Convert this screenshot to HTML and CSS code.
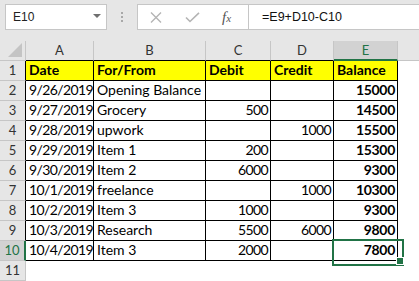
FILE: index.html
```html
<!DOCTYPE html>
<html lang="en">
<head>
	<meta charset="utf-8">
	<title>budget sheet</title>
	<link rel="stylesheet" href="styles.css">
</head>
<body>
	<div class="toolbar">
		<div class="namebox">
			<span>E10</span>
			<span class="caret"></span>
		</div>
		<div class="grip"><i></i><i></i><i></i></div>
		<div class="fbar">
			<div class="fbtns">
				<svg class="ic-x" width="12" height="11" viewBox="0 0 12 11"><path d="M1 0.5 L11 10.5 M11 0.5 L1 10.5" stroke="#b4b4b4" stroke-width="1.4" fill="none"/></svg>
				<svg class="ic-ok" width="15" height="11" viewBox="0 0 15 11"><path d="M1 5.5 L5 9.5 L14 0.8" stroke="#b4b4b4" stroke-width="1.6" fill="none"/></svg>
				<span class="fx">f<small>x</small></span>
			</div>
			<div class="finput">=E9+D10-C10</div>
		</div>
	</div>

	<div class="sheet">
		<!-- column headers -->
		<div class="corner"><svg width="14" height="14" viewBox="0 0 14 14"><path d="M14 0 L14 14 L0 14 Z" fill="#c4c4c4"/></svg></div>
		<div class="ch">A</div>
		<div class="ch">B</div>
		<div class="ch">C</div>
		<div class="ch">D</div>
		<div class="ch sel">E</div>
		<div class="ch last"></div>

		<!-- 1 -->
		<div class="rh">1</div>
		<div class="c hd">Date</div>
		<div class="c hd">For/From</div>
		<div class="c hd">Debit</div>
		<div class="c hd">Credit</div>
		<div class="c hd">Balance</div>
		<div class="e"></div>

		<!-- 2 -->
		<div class="rh">2</div>
		<div class="c n">9/26/2019</div>
		<div class="c">Opening Balance</div>
		<div class="c n"></div>
		<div class="c n"></div>
		<div class="c n b">15000</div>
		<div class="e"></div>

		<!-- 3 -->
		<div class="rh">3</div>
		<div class="c n">9/27/2019</div>
		<div class="c">Grocery</div>
		<div class="c n">500</div>
		<div class="c n"></div>
		<div class="c n b">14500</div>
		<div class="e"></div>

		<!-- 4 -->
		<div class="rh">4</div>
		<div class="c n">9/28/2019</div>
		<div class="c">upwork</div>
		<div class="c n"></div>
		<div class="c n">1000</div>
		<div class="c n b">15500</div>
		<div class="e"></div>

		<!-- 5 -->
		<div class="rh">5</div>
		<div class="c n">9/29/2019</div>
		<div class="c">Item 1</div>
		<div class="c n">200</div>
		<div class="c n"></div>
		<div class="c n b">15300</div>
		<div class="e"></div>

		<!-- 6 -->
		<div class="rh">6</div>
		<div class="c n">9/30/2019</div>
		<div class="c">Item 2</div>
		<div class="c n">6000</div>
		<div class="c n"></div>
		<div class="c n b">9300</div>
		<div class="e"></div>

		<!-- 7 -->
		<div class="rh">7</div>
		<div class="c n">10/1/2019</div>
		<div class="c">freelance</div>
		<div class="c n"></div>
		<div class="c n">1000</div>
		<div class="c n b">10300</div>
		<div class="e"></div>

		<!-- 8 -->
		<div class="rh">8</div>
		<div class="c n">10/2/2019</div>
		<div class="c">Item 3</div>
		<div class="c n">1000</div>
		<div class="c n"></div>
		<div class="c n b">9300</div>
		<div class="e"></div>

		<!-- 9 -->
		<div class="rh">9</div>
		<div class="c n">10/3/2019</div>
		<div class="c">Research</div>
		<div class="c n">5500</div>
		<div class="c n">6000</div>
		<div class="c n b">9800</div>
		<div class="e"></div>

		<!-- 10 -->
		<div class="rh sel">10</div>
		<div class="c n">10/4/2019</div>
		<div class="c">Item 3</div>
		<div class="c n">2000</div>
		<div class="c n"></div>
		<div class="c n b active">7800</div>
		<div class="e"></div>

		<!-- 11 -->
		<div class="rh out">11</div>
		<div class="e"></div>
		<div class="e"></div>
		<div class="e"></div>
		<div class="e"></div>
		<div class="e"></div>
		<div class="e"></div>
	</div>
</body>
</html>
```

FILE: styles.css
```css
*{margin:0; padding:0; box-sizing:border-box;}
body{background:#e6e6e6; font-family:"Lato","Liberation Sans",sans-serif; color:#000; overflow:hidden;}

/* ===== formula bar ===== */
.toolbar{height:41px; display:flex; align-items:flex-start; padding-top:4px; font-family:"Liberation Sans",Arial,sans-serif;}
.namebox{width:102px; height:26px; margin-left:5px; background:#fff; border:1px solid #c6c6c6; display:flex; align-items:center; justify-content:space-between; padding:0 5px 0 7px; font-size:12px; color:#222;}
.caret{width:0; height:0; border-left:4px solid transparent; border-right:4px solid transparent; border-top:4px solid #6f6f6f; margin-top:-2px;}

.grip{width:30px; height:26px; display:flex; flex-direction:column; align-items:center; justify-content:center; gap:2px;}
.grip i{display:block; width:2px; height:2px; background:#a8a8a8;}

.fbar{flex:1; height:26px; background:#fff; border:1px solid #c6c6c6; border-right:none; display:flex;}
.fbtns{width:111px; border-right:1px solid #c6c6c6; display:flex; align-items:center; padding-left:12px;}
.ic-x{margin-right:23px;}
.ic-ok{margin-right:22px;}
.fx{font-family:"Liberation Serif",serif; font-style:italic; font-size:15px; color:#555;}
.fx small{font-size:11px;}
.finput{padding-left:13px; display:flex; align-items:center; font-size:12.5px; color:#111;}

/* ===== sheet grid ===== */
.sheet{display:grid; grid-template-columns:26px 68px 112px 65px 63px 64px 1fr; grid-auto-rows:20px;}

.corner{background:#e6e6e6; border-right:1px solid #c6c6c6; border-bottom:1px solid #c6c6c6; display:flex; align-items:flex-end; justify-content:flex-end; padding:0 3px 3px 0;}
.ch{background:#e6e6e6; border-right:1px solid #c6c6c6; border-bottom:1px solid #000; text-align:center; font-size:13px; line-height:19px; color:#333;}
.ch.last{border-right:none; border-bottom:1px solid #c6c6c6;}
.ch.sel{background:#d2d2d2; color:#217346; border-bottom:2px solid #217346;}

.rh{background:#e6e6e6; border-right:1px solid #000; border-bottom:1px solid #c6c6c6; text-align:center; font-size:13px; line-height:19px; color:#333;}
.rh.sel{background:#d2d2d2; color:#217346; border-right:2px solid #217346;}
.rh.out{border-right:1px solid #c6c6c6;}

.c{background:#fff; border-right:1px solid #000; border-bottom:1px solid #000; padding:0 2px 0 3px; font-size:14px; line-height:18px; white-space:nowrap; overflow:visible;}
/* 숫자는 Calibri 보다 넓어서 자간을 줄임 */
.c.n{text-align:right; letter-spacing:-0.6px;}
.c.b{font-weight:bold; letter-spacing:-0.3px;}
.c.hd{background:#ff0; font-weight:bold;}
.e{background:#fff;}

/* selected cell */
.active{position:relative;}
.active::after{content:""; position:absolute; left:-2px; top:-2px; width:68px; height:23px; border:2px solid #217346;}
.active::before{content:""; position:absolute; left:62px; top:16px; width:6px; height:6px; background:#217346; border:1px solid #fff; z-index:1;}
```
